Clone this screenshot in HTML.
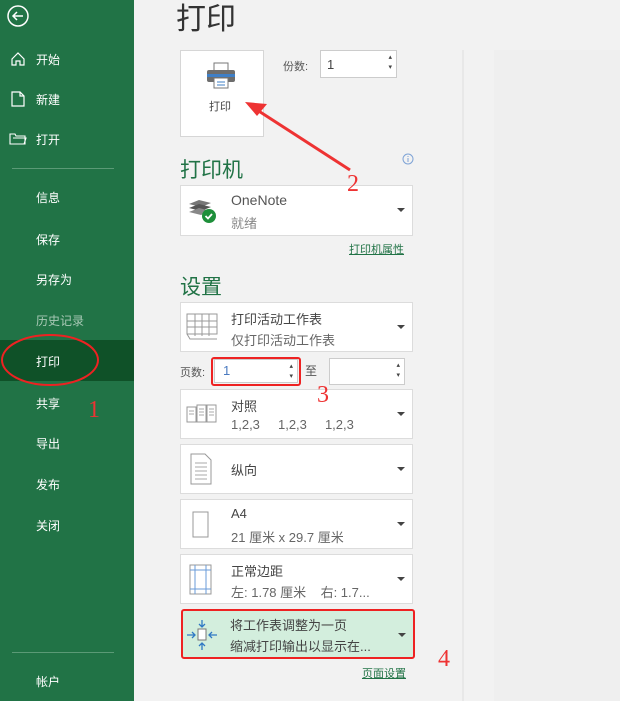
<!DOCTYPE html>
<html><head><meta charset="utf-8"><style>
*{margin:0;padding:0;box-sizing:border-box}
body{width:620px;height:701px;overflow:hidden;background:#f2f2f2;position:relative;font-family:"Liberation Sans","Noto Sans CJK SC",sans-serif;color:#444}
.a{position:absolute}
#side{left:0;top:0;width:134px;height:701px;background:#217346}
.nav{position:absolute;left:36px;color:#fff;font-size:12px}
.box{position:absolute;left:180px;width:233px;height:50px;background:#fff;border:1px solid #dcdcdc}
.t1{position:absolute;left:50px;top:6px;font-size:13px;color:#444}
.t2{position:absolute;left:50px;top:27px;font-size:13px;color:#666}
.dd{position:absolute;right:7px;top:22px;width:0;height:0;border-left:4px solid transparent;border-right:4px solid transparent;border-top:4px solid #444}
h2{position:absolute;left:180px;font-size:21px;font-weight:normal;color:#217346}
.red{color:#e33;font-family:"Liberation Serif",serif;font-size:24px;line-height:24px;position:absolute;z-index:10}
.spin{position:absolute;background:#fff;border:1px solid #ccc}
.spin:after{content:"▴\A▾";white-space:pre;position:absolute;right:4px;top:2px;font-size:7px;line-height:10px;color:#444}
.lnk{position:absolute;font-size:11px;color:#217346;text-decoration:underline}
</style></head><body>
<div id="side" class="a">
<svg class="a" style="left:6px;top:4px" width="24" height="24"><circle cx="12" cy="12" r="10" fill="none" stroke="#fff" stroke-width="1.5"/><path d="M17 12H7M11 8l-4 4 4 4" fill="none" stroke="#fff" stroke-width="1.5"/></svg>
<svg class="a" style="left:10px;top:51px" width="16" height="16"><path d="M2 8L8 2l6 6v6h-4v-4H6v4H2z" fill="none" stroke="#fff" stroke-width="1.2"/></svg>
<div class="nav" style="top:51px">开始</div>
<svg class="a" style="left:11px;top:91px" width="14" height="16"><path d="M1 1h8l4 4v10H1z M9 1v4h4" fill="none" stroke="#fff" stroke-width="1.2"/></svg>
<div class="nav" style="top:91px">新建</div>
<svg class="a" style="left:9px;top:132px" width="18" height="14"><path d="M1 2h5l1 2h9v8H1zM4 6h13l-2 6H1" fill="none" stroke="#fff" stroke-width="1.1"/></svg>
<div class="nav" style="top:131px">打开</div>
<div class="a" style="left:12px;top:168px;width:102px;height:1px;background:#5b9a76"></div>
<div class="nav" style="top:189px">信息</div>
<div class="nav" style="top:231px">保存</div>
<div class="nav" style="top:271px">另存为</div>
<div class="nav" style="top:312px;color:#a9c9b6">历史记录</div>
<div class="a" style="left:0;top:340px;width:134px;height:41px;background:#0f5128"></div>
<div class="nav" style="top:353px">打印</div>
<div class="nav" style="top:395px">共享</div>
<div class="nav" style="top:435px">导出</div>
<div class="nav" style="top:476px">发布</div>
<div class="nav" style="top:517px">关闭</div>
<div class="a" style="left:12px;top:652px;width:102px;height:1px;background:#5b9a76"></div>
<div class="nav" style="top:673px">帐户</div>
</div>
<svg class="a" style="left:0;top:330px;z-index:5" width="110" height="60"><ellipse cx="50" cy="30" rx="48" ry="25" fill="none" stroke="#e22" stroke-width="2"/></svg>
<div class="red" style="left:88px;top:398px">1</div>

<div class="a" style="left:176px;top:-6px;font-size:30px;color:#333">打印</div>
<div class="a" style="left:462px;top:50px;width:2px;height:651px;background:#e8e8e8"></div>
<div class="a" style="left:494px;top:50px;width:126px;height:651px;background:#efefef"></div>

<div class="a" style="left:180px;top:50px;width:84px;height:87px;background:#fff;border:1px solid #d6d6d6"></div>
<svg class="a" style="left:205px;top:62px" width="32" height="30"><rect x="9" y="1" width="14" height="8" fill="#fff" stroke="#777"/><rect x="2" y="8" width="28" height="12" rx="2" fill="#6d6d6d"/><rect x="2" y="12" width="28" height="3" fill="#3f7fc6"/><rect x="9" y="16" width="14" height="10" fill="#fff" stroke="#777"/><path d="M12 20h8M12 23h8" stroke="#3f7fc6"/></svg>
<div class="a" style="left:209px;top:98px;font-size:11px;color:#444">打印</div>
<div class="a" style="left:283px;top:58px;font-size:11px;color:#555">份数:</div>
<div class="spin" style="left:320px;top:50px;width:77px;height:28px"><span class="a" style="left:6px;top:6px;font-size:13px;color:#444">1</span></div>

<svg class="a" style="left:240px;top:98px;z-index:5" width="120" height="80"><path d="M110 72L14 10" stroke="#e33" stroke-width="3"/><path d="M5 4l22 2-10 12z" fill="#e33"/></svg>
<div class="red" style="left:347px;top:172px">2</div>

<h2 style="top:154px">打印机</h2>
<svg class="a" style="left:402px;top:153px" width="12" height="12"><circle cx="6" cy="6" r="5" fill="none" stroke="#7ea3d6"/><path d="M6 5v4M6 3v1" stroke="#7ea3d6"/></svg>
<div class="box" style="top:185px;height:51px">
<svg class="a" style="left:6px;top:10px" width="32" height="30"><path d="M2 8l10-4 12 3-10 4z" fill="#777"/><path d="M2 12l10-4 12 3-10 4z" fill="#555"/><path d="M2 16l10-4 12 3-10 4z" fill="#888"/><circle cx="22" cy="20" r="7" fill="#1e8f3a"/><path d="M18.5 20l2.5 2.5 4-4.5" stroke="#fff" stroke-width="1.8" fill="none"/></svg>
<div class="t1" style="font-size:14px;color:#555">OneNote</div><div class="t2" style="color:#888">就绪</div><div class="dd"></div></div>
<div class="lnk" style="left:349px;top:241px">打印机属性</div>

<h2 style="top:271px">设置</h2>
<div class="box" style="top:302px">
<svg class="a" style="left:5px;top:10px" width="32" height="30"><path d="M1 1h30v20H1zM1 8h30M1 14h30M9 1v22M16 1v22M23 1v22M1 21l3 5h27" fill="none" stroke="#999"/></svg>
<div class="t1">打印活动工作表</div><div class="t2">仅打印活动工作表</div><div class="dd"></div></div>

<div class="a" style="left:180px;top:364px;font-size:11px;color:#555">页数:</div>
<div class="spin" style="left:214px;top:359px;width:84px;height:24px"><span class="a" style="left:8px;top:3px;font-size:13px;color:#4a7ac0">1</span></div>
<div class="a" style="left:211px;top:357px;width:90px;height:29px;border:2px solid #e22;border-radius:3px"></div>
<div class="a" style="left:305px;top:362px;font-size:12px;color:#555">至</div>
<div class="spin" style="left:329px;top:358px;width:76px;height:27px"></div>
<div class="red" style="left:317px;top:383px">3</div>

<div class="box" style="top:389px">
<svg class="a" style="left:5px;top:14px" width="32" height="20"><path d="M1 3h9v15H1zM11 1h9v17h-9zM21 1h9v17h-9z" fill="#fff" stroke="#999"/><path d="M13 5h5M13 8h5M13 11h5M23 5h5M23 8h5M23 11h5M3 7h5M3 10h5" stroke="#aaa"/></svg>
<div class="t1">对照</div><div class="t2">1,2,3 &nbsp;&nbsp;&nbsp; 1,2,3 &nbsp;&nbsp;&nbsp; 1,2,3</div><div class="dd"></div></div>

<div class="box" style="top:444px">
<svg class="a" style="left:9px;top:8px" width="22" height="32"><path d="M1 1h14l6 6v24H1z" fill="#fff" stroke="#999"/><path d="M5 10h12M5 14h12M5 18h12M5 22h12M5 26h12" stroke="#aaa"/></svg>
<div class="t1" style="top:15px">纵向</div><div class="dd"></div></div>

<div class="box" style="top:499px">
<svg class="a" style="left:11px;top:11px" width="20" height="28"><rect x="1" y="1" width="15" height="25" fill="#fff" stroke="#999"/></svg>
<div class="t1">A4</div><div class="t2">21 厘米 x 29.7 厘米</div><div class="dd"></div></div>

<div class="box" style="top:554px">
<svg class="a" style="left:8px;top:9px" width="24" height="32"><rect x="1" y="1" width="21" height="29" fill="#fff" stroke="#999"/><path d="M6 1v29M17 1v29M1 6h21M1 25h21" stroke="#6a9bd8"/></svg>
<div class="t1">正常边距</div><div class="t2">左: 1.78 厘米 &nbsp;&nbsp;&nbsp;右: 1.7...</div><div class="dd"></div></div>

<div class="box" style="top:609px;left:181px;width:234px;height:50px;background:#d3eedd;border:2px solid #e22;border-radius:3px">
<svg class="a" style="left:3px;top:8px" width="32" height="32"><rect x="12" y="10" width="8" height="11" fill="#fff" stroke="#777"/><path d="M16 1v7M13 5l3 3 3-3M16 31v-7M13 27l3-3 3 3M1 16h8M6 13l3 3-3 3M31 16h-8M26 13l-3 3 3 3" stroke="#2f78c4" fill="none" stroke-width="1.3"/></svg>
<div class="t1" style="left:47px;top:4px">将工作表调整为一页</div><div class="t2" style="left:47px;top:25px;color:#444">缩减打印输出以显示在...</div><div class="dd"></div></div>
<div class="lnk" style="left:362px;top:665px">页面设置</div>
<div class="red" style="left:438px;top:647px">4</div>
</body></html>
